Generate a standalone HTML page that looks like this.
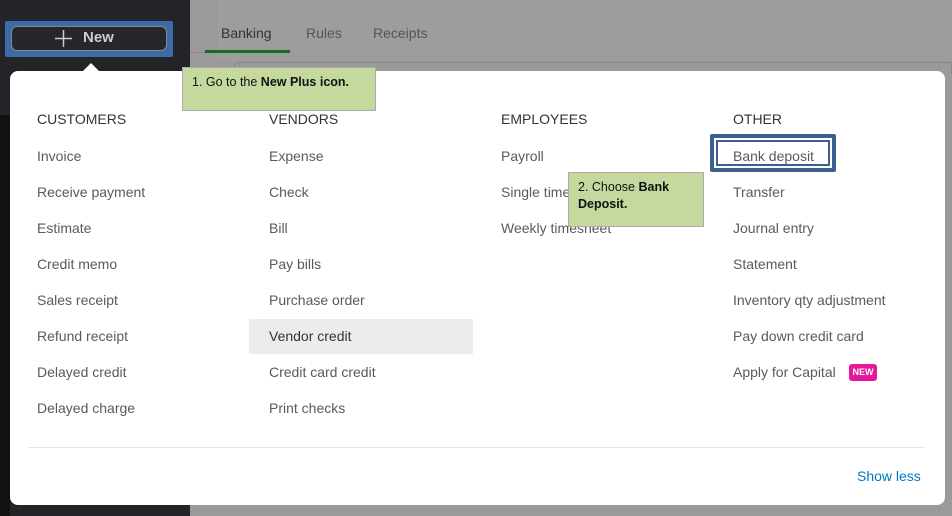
<!DOCTYPE html>
<html><head><style>
*{margin:0;padding:0;box-sizing:border-box}
body{width:952px;height:516px;overflow:hidden;position:relative;background:#9a9a9a;font-family:"Liberation Sans",sans-serif}
.side{position:absolute;left:0;top:0;width:190px;height:516px;background:#232427}
.abs{position:absolute}
.item{position:absolute;font-size:14px;color:#5a5a5a;white-space:nowrap;line-height:16px}
.h{position:absolute;font-size:14px;color:#333;line-height:16px}
.call{position:absolute;background:#c5d89e;border:1px solid #aaa;font-family:"Liberation Sans",sans-serif;font-size:12.5px;color:#111;padding:6px 9px;line-height:17px}
</style></head><body>
<div class="side"></div>
<div class="abs" style="left:0;top:115px;width:10px;height:401px;background:#111"></div>
<div class="abs" style="left:190px;top:52px;width:762px;height:1px;background:#888"></div>
<div class="abs" style="left:218px;top:0;width:734px;height:60px;background:#9d9d9d"></div>
<div class="abs" style="left:234px;top:62px;width:718px;height:12px;border:1px solid #888;border-bottom:none;border-radius:4px 0 0 0;background:#9a9a9a"></div>
<div class="abs" style="left:221px;top:25px;font-size:14px;color:#333">Banking</div>
<div class="abs" style="left:306px;top:25px;font-size:14px;color:#555">Rules</div>
<div class="abs" style="left:373px;top:25px;font-size:14px;color:#555">Receipts</div>
<div class="abs" style="left:205px;top:50px;width:85px;height:3px;background:#1d6a1d"></div>
<div class="abs" style="left:5px;top:21px;width:168px;height:36px;background:#3f6aa8;border-radius:2px"></div>
<div class="abs" style="left:11px;top:26px;width:156px;height:25px;background:#25272a;border-radius:6px;border:1px solid #888"></div>
<svg class="abs" style="left:54px;top:29px" width="19" height="19"><path d="M9.5 1V18M1 9.5H18" stroke="#ccc" stroke-width="1.5"/></svg>
<div class="abs" style="left:83px;top:29px;font-size:15px;color:#ccc;font-weight:bold">New</div>
<div class="abs" style="left:82px;top:63px;width:0;height:0;border-left:9px solid transparent;border-right:9px solid transparent;border-bottom:9px solid #fff"></div>
<div class="abs" style="left:10px;top:71px;width:935px;height:434px;background:#fff;border-radius:8px"></div>
<div class="abs" style="left:249px;top:319px;width:224px;height:35px;background:#ececef"></div>
<div class="h" style="left:37px;top:111px">CUSTOMERS</div>
<div class="h" style="left:269px;top:111px">VENDORS</div>
<div class="h" style="left:501px;top:111px">EMPLOYEES</div>
<div class="h" style="left:733px;top:111px">OTHER</div>
<div class="item" style="left:37px;top:148px">Invoice</div>
<div class="item" style="left:37px;top:184px">Receive payment</div>
<div class="item" style="left:37px;top:220px">Estimate</div>
<div class="item" style="left:37px;top:256px">Credit memo</div>
<div class="item" style="left:37px;top:292px">Sales receipt</div>
<div class="item" style="left:37px;top:328px">Refund receipt</div>
<div class="item" style="left:37px;top:364px">Delayed credit</div>
<div class="item" style="left:37px;top:400px">Delayed charge</div>
<div class="item" style="left:269px;top:148px">Expense</div>
<div class="item" style="left:269px;top:184px">Check</div>
<div class="item" style="left:269px;top:220px">Bill</div>
<div class="item" style="left:269px;top:256px">Pay bills</div>
<div class="item" style="left:269px;top:292px">Purchase order</div>
<div class="item" style="left:269px;top:328px;color:#333">Vendor credit</div>
<div class="item" style="left:269px;top:364px">Credit card credit</div>
<div class="item" style="left:269px;top:400px">Print checks</div>
<div class="item" style="left:501px;top:148px">Payroll</div>
<div class="item" style="left:501px;top:184px">Single time activity</div>
<div class="item" style="left:501px;top:220px">Weekly timesheet</div>
<div class="abs" style="left:710px;top:134px;width:126px;height:38px;border:4px solid #3b5f8e;border-radius:2px;background:#fff"><div style="position:absolute;left:2px;top:2px;right:2px;bottom:2px;border:2px solid #3b5f8e"></div></div>
<div class="item" style="left:733px;top:148px">Bank deposit</div>
<div class="item" style="left:733px;top:184px">Transfer</div>
<div class="item" style="left:733px;top:220px">Journal entry</div>
<div class="item" style="left:733px;top:256px">Statement</div>
<div class="item" style="left:733px;top:292px">Inventory qty adjustment</div>
<div class="item" style="left:733px;top:328px">Pay down credit card</div>
<div class="item" style="left:733px;top:364px">Apply for Capital</div>
<div class="abs" style="left:849px;top:364px;width:28px;height:17px;background:#e5189a;border-radius:3px;color:#fff;font-size:9px;font-weight:bold;text-align:center;line-height:17px">NEW</div>
<div class="abs" style="left:28px;top:447px;width:897px;height:1px;background:#e4e4e4"></div>
<div class="abs" style="left:857px;top:468px;font-size:14px;color:#0077c5">Show less</div>
<div class="call" style="left:182px;top:67px;width:194px;height:44px">1. Go to the <b>New Plus icon.</b></div>
<div class="call" style="left:568px;top:172px;width:136px;height:55px">2. Choose <b>Bank Deposit.</b></div>
</body></html>
